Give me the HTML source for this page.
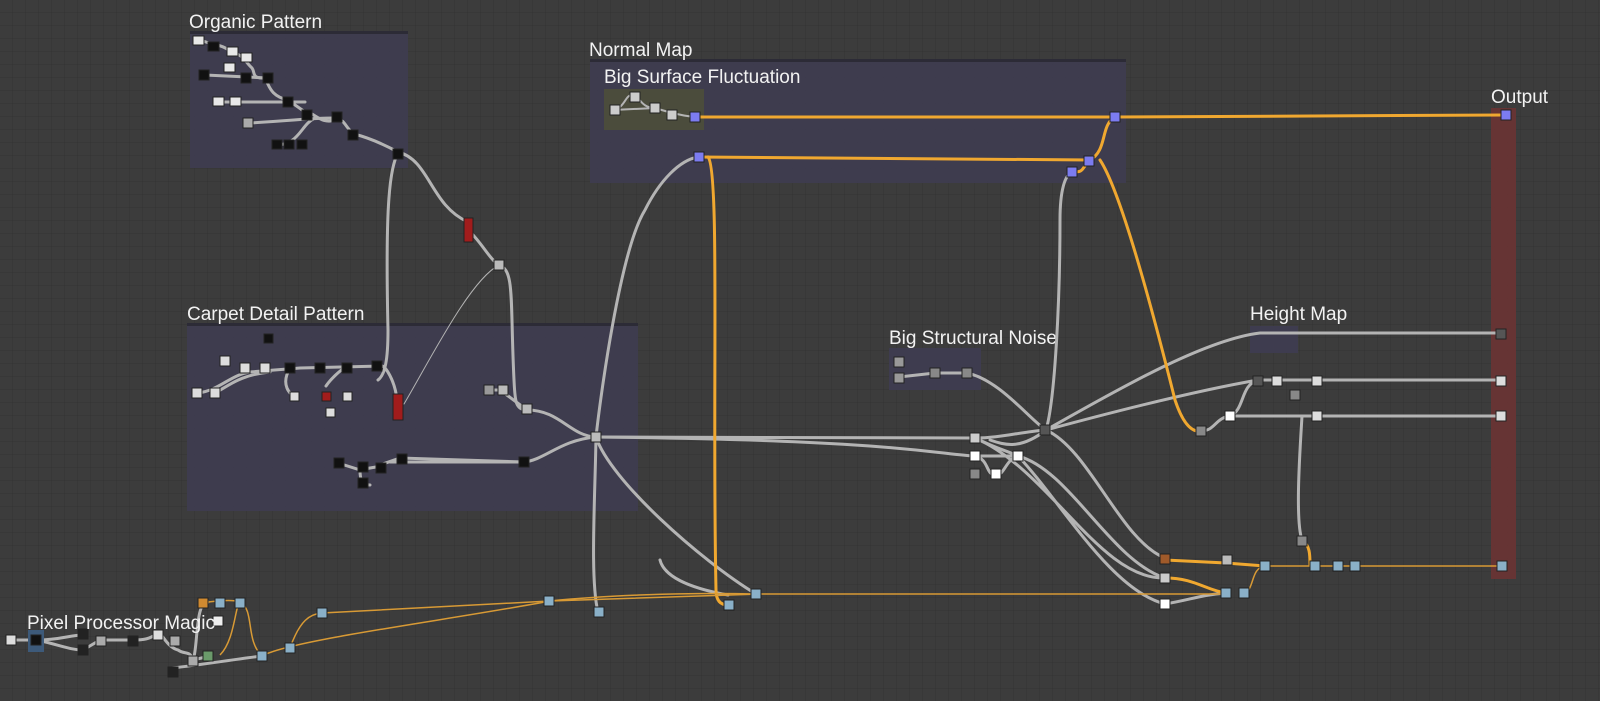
<!DOCTYPE html>
<html><head><meta charset="utf-8"><style>
html,body{margin:0;padding:0;background:#3b3b3b;overflow:hidden}
svg{display:block}
text{font-family:"Liberation Sans","DejaVu Sans",sans-serif;fill:#f2f2f2}
</style></head><body>
<svg width="1600" height="701" viewBox="0 0 1600 701" xmlns="http://www.w3.org/2000/svg">
<defs>
<pattern id="g" width="13" height="13" patternUnits="userSpaceOnUse">
<rect width="13" height="13" fill="#3c3c3c"/>
<path d="M13 0V13M0 13H13" stroke="#333" stroke-width="1"/>
</pattern>
</defs>
<rect width="1600" height="701" fill="url(#g)"/>

<rect x="190" y="32" width="218" height="136" fill="#3e3c4f" opacity="0.95"/>
<rect x="190" y="31" width="218" height="3" fill="#2c2b36"/>
<text x="189" y="28" font-size="19">Organic Pattern</text>

<rect x="590" y="60" width="536" height="123" fill="#3e3c4f" opacity="0.95"/>
<rect x="590" y="59" width="536" height="3" fill="#2c2b36"/>
<text x="589" y="56" font-size="19">Normal Map</text>
<text x="604" y="83" font-size="19" fill="#dcdcf0">Big Surface Fluctuation</text>
<rect x="604" y="89" width="100" height="41" fill="#4b4c3c"/>

<rect x="187" y="324" width="451" height="187" fill="#3e3c4f" opacity="0.95"/>
<rect x="187" y="323" width="451" height="3" fill="#2c2b36"/>
<text x="187" y="320" font-size="19">Carpet Detail Pattern</text>

<rect x="889" y="348" width="92" height="42" fill="#3e3c4f"/>
<text x="889" y="344" font-size="19">Big Structural Noise</text>

<rect x="1250" y="326" width="48" height="27" fill="#3e3c4f"/>
<text x="1250" y="320" font-size="19">Height Map</text>

<rect x="1491" y="108" width="25" height="471" fill="#6a3333" opacity="0.9"/>
<text x="1491" y="103" font-size="19">Output</text>

<g fill="none" stroke="#b4b4b4" stroke-width="3" stroke-linecap="round">
<path d="M200 40 L212 44 C225 46 228 50 232 52 C245 56 245 62 252 68 C255 72 252 78 262 78 C270 78 265 95 288 100 L305 112 C315 112 320 125 336 120 C345 118 345 128 354 134 C370 138 385 145 398 152"/>
<path d="M205 75 L268 78 M218 102 L305 102 M250 123 C300 120 310 118 335 118 M275 145 C300 145 300 125 315 118"/>
<path d="M398 152 C390 170 385 200 388 330 C388 360 385 375 378 380"/>
<path d="M398 152 C430 160 430 205 468 222"/>
<path d="M468 230 C480 240 490 260 499 265 C515 270 510 300 514 380 C515 400 515 410 527 410 C560 410 570 436 596 437"/>
<path d="M499 265 C470 280 430 360 404 404" stroke-width="1"/>
<path d="M198 393 C220 390 230 375 250 372 L300 368 L382 366 C385 366 395 380 397 400"/>
<path d="M215 393 C230 385 240 375 270 372 M290 368 C280 385 290 395 296 397 M326 386 C330 380 340 370 345 368"/>
<path d="M500 390 L527 410 M487 390 L500 390"/>
<path d="M596 437 C560 440 545 460 524 462 L390 462 M364 469 L376 467 M338 463 L360 470 C360 480 362 485 370 485 M380 465 L400 458 L524 462"/>
<path d="M596 437 L975 438 C1000 438 1020 432 1046 430"/>
<path d="M596 437 C900 440 940 455 975 456 L1018 456"/>
<path d="M596 437 C600 400 620 250 645 210 C660 180 680 160 698 157"/>
<path d="M596 437 C595 500 590 580 598 612"/>
<path d="M596 437 C610 480 700 560 756 594"/>
<path d="M975 456 C990 460 985 475 996 475 C1005 475 1005 460 1018 456 M975 438 C1000 450 1005 450 1018 456"/>
<path d="M1046 430 C1055 400 1060 300 1060 220 C1060 190 1065 175 1072 172"/>
<path d="M1046 430 C1100 400 1200 340 1260 333 L1500 333"/>
<path d="M1046 430 C1120 410 1200 390 1258 380 L1500 380"/>
<path d="M1046 430 C1020 450 1005 445 990 440"/>
<path d="M967 373 C1000 380 1030 420 1046 430 M899 377 L935 373 L967 373"/>
<path d="M1046 430 C1090 450 1120 540 1165 558"/>
<path d="M1018 456 C1070 470 1110 560 1165 578"/>
<path d="M1018 456 C1060 500 1110 590 1165 604 M975 438 C1050 470 1100 580 1165 578"/>
<path d="M1165 604 C1190 600 1200 595 1226 593"/>
<path d="M1201 431 C1215 431 1215 418 1230 416 L1500 416 M1230 416 C1245 410 1240 385 1258 380"/>
<path d="M1302 416 C1300 450 1295 520 1302 540"/>
<path d="M1282 380 L1318 380"/>
<path d="M613 110 C625 108 625 95 632 95 C640 95 640 108 655 108 C668 112 678 115 694 117 M613 110 L655 108" stroke-width="2"/>
<path d="M12 640 L37 640 C60 640 70 635 83 635 M37 640 C60 645 70 650 83 650 L100 640 L133 640 C150 640 150 637 160 633 C165 640 170 648 178 650 C185 655 190 650 193 660"/>
<path d="M172 668 C200 665 230 660 262 656"/>
<path d="M193 660 C198 650 195 600 208 602 M193 660 L210 656"/>
<path d="M728 595 C700 590 665 580 660 560"/>
</g>
<g fill="none" stroke="#f0a830" stroke-width="3" stroke-linecap="round">
<path d="M694 117 L1115 117 L1506 115"/>
<path d="M1115 117 C1100 125 1108 150 1090 160 L698 157"/>
<path d="M708 157 C720 170 712 400 716 590 C716 600 720 605 728 605"/>
<path d="M1090 160 C1080 170 1085 172 1072 172"/>
<path d="M1100 160 C1120 190 1150 300 1175 400 C1185 430 1195 432 1201 431"/>
<path d="M1165 560 L1226 563 L1265 566 M1165 578 C1195 578 1205 590 1226 593"/>
<path d="M1302 540 C1310 545 1310 555 1310 565"/>
</g>
<g fill="none" stroke="#d89a35" stroke-width="1.5">
<path d="M290 648 C300 620 310 614 322 613 L550 601 L760 594 L1226 594"/>
<path d="M262 656 C290 640 450 620 550 601 C600 596 680 592 756 594"/>
<path d="M1244 593 C1255 590 1250 568 1265 566 L1505 566"/>
<path d="M208 602 C225 600 235 600 240 602 C255 610 245 640 262 656 M220 655 C235 640 235 605 240 602"/>
</g>

<g stroke="#222" stroke-width="1">
<g fill="#e8e8e8"><rect x="193" y="36" width="11" height="9"/><rect x="227" y="47" width="11" height="9"/><rect x="241" y="53" width="11" height="9"/><rect x="224" y="63" width="11" height="9"/><rect x="213" y="97" width="11" height="9"/><rect x="230" y="97" width="11" height="9"/><rect x="243" y="118" width="10" height="10" fill="#aaa"/></g>
<g fill="#111"><rect x="208" y="42" width="11" height="9"/><rect x="199" y="70" width="10" height="10"/><rect x="241" y="73" width="10" height="10"/><rect x="263" y="73" width="10" height="10"/><rect x="283" y="97" width="10" height="10"/><rect x="302" y="110" width="10" height="10"/><rect x="332" y="112" width="10" height="10"/><rect x="348" y="130" width="10" height="10"/><rect x="393" y="149" width="10" height="10"/><rect x="272" y="140" width="10" height="9"/><rect x="284" y="140" width="10" height="9"/><rect x="297" y="140" width="10" height="9"/></g>
<g fill="#a11c1c"><rect x="464" y="218" width="9" height="24"/><rect x="393" y="394" width="10" height="26"/><rect x="322" y="392" width="9" height="9"/></g>
<g fill="#bbb"><rect x="494" y="260" width="10" height="10"/><rect x="522" y="404" width="10" height="10"/><rect x="591" y="432" width="10" height="10"/><rect x="498" y="385" width="10" height="10"/><rect x="484" y="385" width="10" height="10" fill="#999"/></g>
<g fill="#ddd"><rect x="192" y="388" width="10" height="10"/><rect x="210" y="388" width="10" height="10"/><rect x="220" y="356" width="10" height="10"/><rect x="240" y="363" width="10" height="10"/><rect x="260" y="363" width="10" height="10"/><rect x="290" y="392" width="9" height="9"/><rect x="343" y="392" width="9" height="9"/><rect x="326" y="408" width="9" height="9"/></g>
<g fill="#111"><rect x="264" y="334" width="9" height="9"/><rect x="285" y="363" width="10" height="10"/><rect x="315" y="363" width="10" height="10"/><rect x="342" y="363" width="10" height="10"/><rect x="372" y="361" width="10" height="10"/><rect x="334" y="458" width="10" height="10"/><rect x="358" y="462" width="10" height="10"/><rect x="358" y="478" width="10" height="10"/><rect x="376" y="463" width="10" height="10"/><rect x="397" y="454" width="10" height="10"/><rect x="519" y="457" width="10" height="10"/></g>
<g fill="#7c7cf0"><rect x="690" y="112" width="10" height="10"/><rect x="694" y="152" width="10" height="10"/><rect x="1084" y="156" width="10" height="10"/><rect x="1067" y="167" width="10" height="10"/><rect x="1110" y="112" width="10" height="10"/><rect x="1501" y="110" width="10" height="10"/></g>
<g fill="#ccc"><rect x="610" y="105" width="10" height="10"/><rect x="630" y="92" width="10" height="10"/><rect x="650" y="103" width="10" height="10"/><rect x="667" y="110" width="10" height="10"/></g>
<g fill="#ccc"><rect x="970" y="433" width="10" height="10"/><rect x="1040" y="425" width="10" height="10" fill="#555"/><rect x="894" y="357" width="10" height="10" fill="#999"/><rect x="930" y="368" width="10" height="10" fill="#888"/><rect x="962" y="368" width="10" height="10" fill="#888"/><rect x="894" y="373" width="10" height="10" fill="#999"/></g>
<g fill="#fff"><rect x="970" y="451" width="10" height="10"/><rect x="1013" y="451" width="10" height="10"/><rect x="991" y="469" width="10" height="10"/><rect x="1160" y="599" width="10" height="10"/><rect x="1225" y="411" width="10" height="10"/></g>
<g fill="#888"><rect x="970" y="469" width="10" height="10"/><rect x="1196" y="426" width="10" height="10"/><rect x="1290" y="390" width="10" height="10"/><rect x="1297" y="536" width="10" height="10"/><rect x="1253" y="376" width="10" height="10" fill="#555"/></g>
<g fill="#ddd"><rect x="1272" y="376" width="10" height="10"/><rect x="1312" y="376" width="10" height="10"/><rect x="1312" y="411" width="10" height="10"/><rect x="1496" y="376" width="10" height="10"/><rect x="1496" y="411" width="10" height="10"/></g>
<rect x="1496" y="329" width="10" height="10" fill="#555"/>
<rect x="1160" y="554" width="10" height="10" fill="#a05a2a"/>
<rect x="1160" y="573" width="10" height="10" fill="#ccc"/>
<g fill="#8ab0c8"><rect x="1222" y="555" width="10" height="10" fill="#bbb"/><rect x="1221" y="588" width="10" height="10"/><rect x="1239" y="588" width="10" height="10"/><rect x="1260" y="561" width="10" height="10"/><rect x="1310" y="561" width="10" height="10"/><rect x="1333" y="561" width="10" height="10"/><rect x="1350" y="561" width="10" height="10"/><rect x="1497" y="561" width="10" height="10"/><rect x="751" y="589" width="10" height="10"/><rect x="724" y="600" width="10" height="10"/><rect x="544" y="596" width="10" height="10"/><rect x="594" y="607" width="10" height="10"/><rect x="317" y="608" width="10" height="10"/><rect x="285" y="643" width="10" height="10"/><rect x="257" y="651" width="10" height="10"/><rect x="215" y="598" width="10" height="10"/><rect x="235" y="598" width="10" height="10"/><rect x="203" y="651" width="10" height="10" fill="#6a9a6a"/></g>
<rect x="198" y="598" width="10" height="10" fill="#d08a30"/>
<rect x="6" y="635" width="10" height="10" fill="#ddd"/>
<rect x="28" y="630" width="16" height="22" fill="#3d5a7a" stroke="none"/>
<rect x="31" y="635" width="10" height="10" fill="#111"/>
<g fill="#222"><rect x="78" y="629" width="10" height="10"/><rect x="78" y="645" width="10" height="10"/><rect x="96" y="636" width="10" height="10" fill="#aaa"/><rect x="128" y="636" width="10" height="10"/><rect x="153" y="630" width="10" height="10" fill="#ddd"/><rect x="170" y="636" width="10" height="10" fill="#aaa"/><rect x="188" y="656" width="10" height="10" fill="#aaa"/><rect x="168" y="667" width="10" height="10"/><rect x="213" y="616" width="10" height="10" fill="#eee"/></g>
</g>
<text x="27" y="629" font-size="19">Pixel Processor  Magic</text>
</svg>
</body></html>
